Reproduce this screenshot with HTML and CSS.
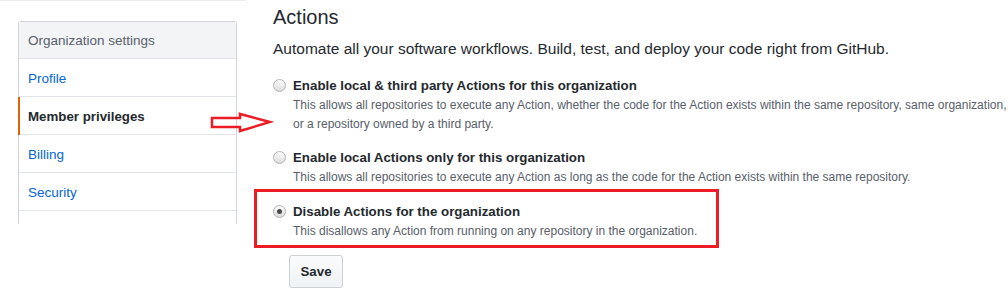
FILE: index.html
```html
<!DOCTYPE html>
<html lang="en">
<head>
    <meta charset="UTF-8">
    <title>Actions settings</title>
    <link rel="stylesheet" href="styles.css">
</head>
<body>
    <div class="topline"></div>

    <div class="page">
        <!-- SIDEBAR -->
        <nav class="menu">
            <div class="menu-heading">Organization settings</div>
            <a href="#" class="menu-item">Profile</a>
            <a href="#" class="menu-item selected">Member privileges</a>
            <a href="#" class="menu-item">Billing</a>
            <a href="#" class="menu-item">Security</a>
            <div class="menu-rest"></div>
        </nav>

        <!-- ACTIONS -->
        <main class="content">
            <h2 class="subhead">Actions</h2>
            <p class="lead">Automate all your software workflows. Build, test, and deploy your code right from GitHub.</p>

            <form>
                <div class="option">
                    <label class="option-label"><span class="radio"></span>Enable local &amp; third party Actions for this organization</label>
                    <p class="note">This allows all repositories to execute any Action, whether the code for the Action exists within the same repository, same organization, or a repository owned by a third party.</p>
                </div>
                <div class="option">
                    <label class="option-label"><span class="radio"></span>Enable local Actions only for this organization</label>
                    <p class="note">This allows all repositories to execute any Action as long as the code for the Action exists within the same repository.</p>
                </div>
                <div class="option marked">
                    <label class="option-label"><span class="radio checked"></span>Disable Actions for the organization</label>
                    <p class="note">This disallows any Action from running on any repository in the organization.</p>
                </div>
                <button type="button" class="btn">Save</button>
            </form>
        </main>
    </div>

    <!-- red annotation arrow -->
    <svg class="arrow" width="64" height="24" viewBox="0 0 64 24">
        <path d="M2 6 H30 V2 L60 10 L30 19 V15 H2 Z" fill="none" stroke="#ed1c24" stroke-width="2.5"/>
    </svg>
</body>
</html>
```

FILE: styles.css
```css
body {
    margin: 0;
    font-family: "Liberation Sans", Arial, sans-serif;
    font-size: 14px;
    color: #24292e;
    background-color: #fff;
}
.topline {
    width: 246px;
    height: 1px;
    background-color: #eaeaea;
}
.page {
    display: flex;
    align-items: flex-start;
    gap: 36px;
    padding-left: 18px;
}

/* sidebar */
.menu {
    width: 217px;
    margin-top: 20px;
    border: 1px solid #d1d5da;
    border-bottom: none;
    border-radius: 3px 3px 0 0;
    display: flex;
    flex-direction: column;
    font-size: 13.5px;
}
.menu-heading {
    height: 36px;
    line-height: 37px;
    padding-left: 9px;
    background-color: #f3f4f6;
    color: #586069;
    border-bottom: 1px solid #e1e4e8;
}
.menu-item {
    position: relative;
    height: 36px;
    padding-top: 1px;
    line-height: 37px;
    padding-left: 9px;
    color: #0366d6;
    text-decoration: none;
    border-bottom: 1px solid #e1e4e8;
}
.menu-item.selected {
    color: #24292e;
    font-weight: bold;
    font-size: 13.3px;
}
.menu-item.selected::before {
    content: "";
    position: absolute;
    left: -1px;
    top: 0;
    bottom: -1px;
    width: 2px;
    background-color: #e36209;
}
.menu-rest {
    height: 13px;
}

/* content */
.content {
    flex: 1;
}
.subhead {
    margin: 0;
    font-size: 20px;
    font-weight: normal;
    line-height: 32px;
}
.lead {
    margin: 6px 0 17px 0;
    font-size: 15.5px;
    line-height: 20px;
}
.option {
    margin-bottom: 14px;
    padding-left: 20px;
}
.option-label {
    display: block;
    position: relative;
    margin-left: -20px;
    padding-left: 20px;
    font-weight: bold;
    font-size: 13.3px;
    line-height: 20px;
}
.radio {
    position: absolute;
    left: 0;
    top: 3px;
    width: 11px;
    height: 11px;
    border: 1px solid #b2b2b2;
    border-radius: 50%;
    background: linear-gradient(#fdfdfd, #dcdcdc);
}
.radio.checked::after {
    content: "";
    position: absolute;
    left: 3px;
    top: 3px;
    width: 5px;
    height: 5px;
    border-radius: 50%;
    background-color: #4a4a4a;
}
.note {
    margin: 0;
    font-size: 12px;
    line-height: 19px;
    color: #586069;
}
.option.marked {
    width: 423px;
    margin: -12px 0 7px -19px;
    padding: 10px 0 4px 36px;
    border: 3px solid #ed1c24;
}
.btn {
    width: 54px;
    height: 33px;
    margin-left: 16px;
    font-family: inherit;
    font-size: 13.3px;
    font-weight: bold;
    color: #24292e;
    background: linear-gradient(#fafbfc, #eff3f6);
    border: 1px solid #cdd1d5;
    border-radius: 3px;
}

.arrow {
    position: absolute;
    left: 210px;
    top: 112px;
}
```
